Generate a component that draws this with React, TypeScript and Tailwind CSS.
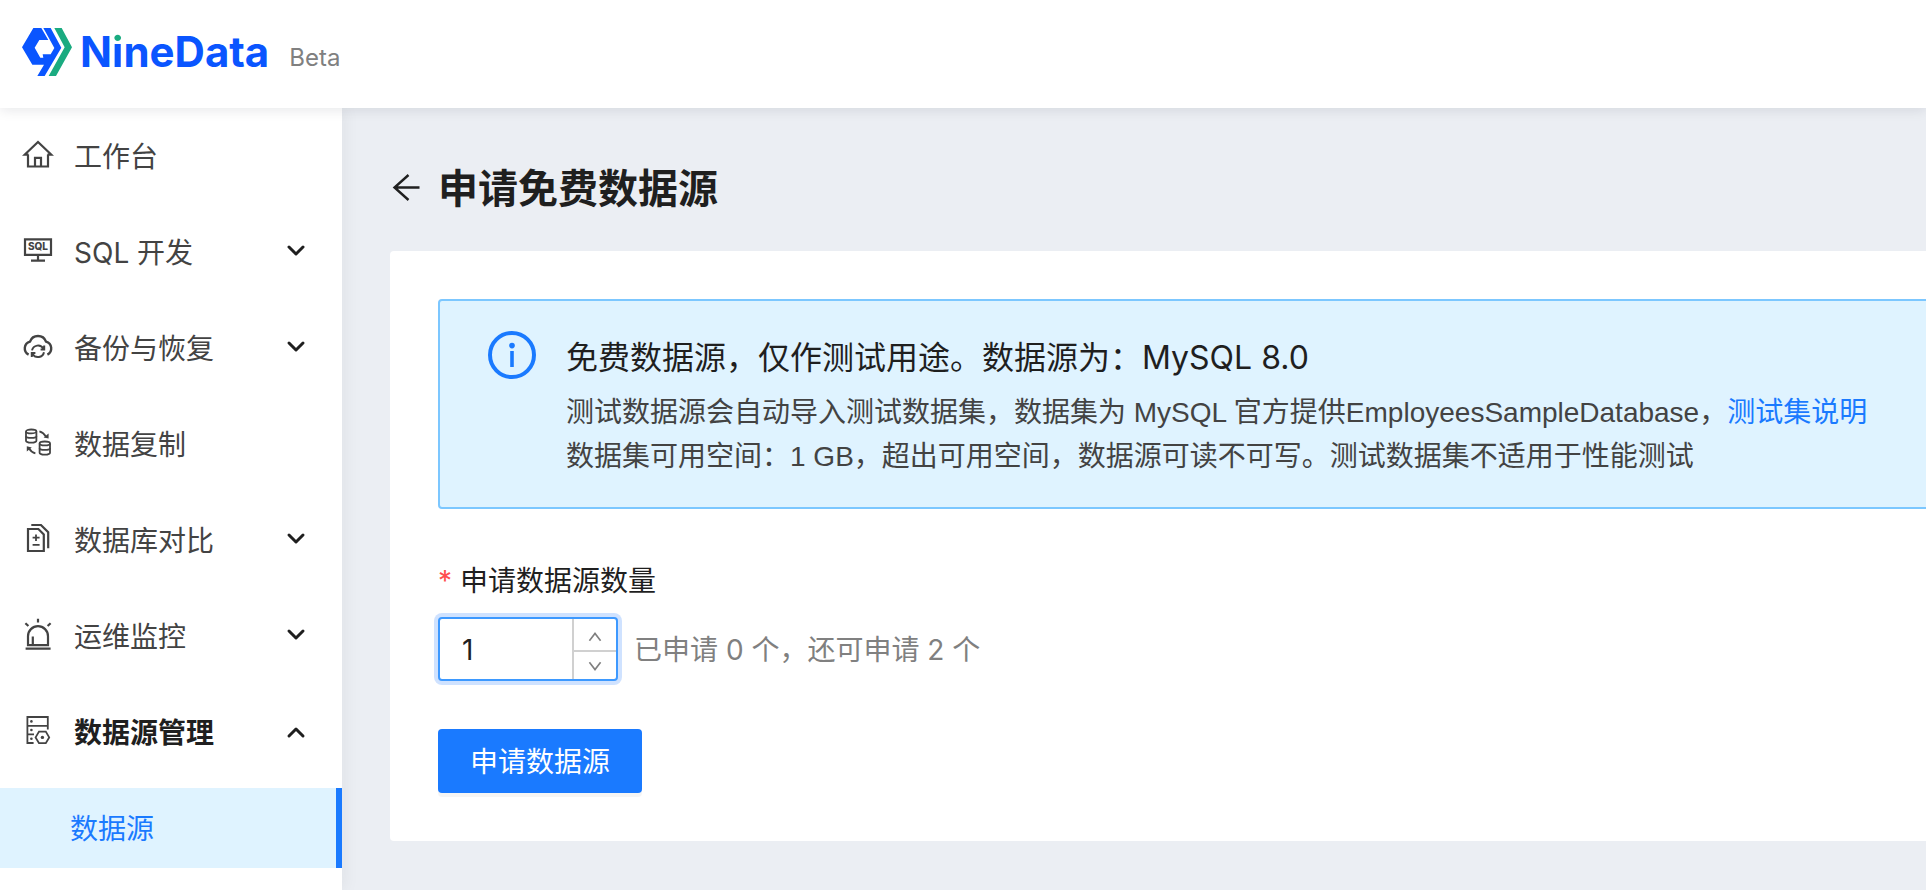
import React, { useState } from 'react';

type IconProps = { className?: string };

const iconBase = {
  width: 32,
  height: 32,
  viewBox: '0 0 32 32',
  fill: 'none',
  stroke: 'currentColor',
  strokeWidth: 2.2,
  'aria-hidden': true,
} as const;

const HomeIcon = () => (
  <svg {...iconBase}>
    <path d="M6 14.5v12h20v-12M6.5 14.7H2.6L16 2l13.4 12.7h-3.9M13 26.5v-8.7h6v8.7" />
  </svg>
);

const SqlIcon = () => (
  <svg {...iconBase}>
    <path d="M3 3.3h26v15.5H3zM16 19v5.5M9 24.6h14" />
    <text x="16" y="14.4" textAnchor="middle" fontSize="10" fontWeight="800" fill="currentColor" stroke="none">
      SQL
    </text>
  </svg>
);

const BackupIcon = () => (
  <svg {...iconBase}>
    <path d="M6.6 22.6A7 7 0 0 1 8 9.6a8.5 8.5 0 0 1 16 0 7 7 0 0 1 1.4 13" strokeWidth="2.4" />
    <path d="M10 18.4A6.2 6.2 0 0 1 21.4 16.6M22.2 13.6v4h-3.6M22 20.2a6.2 6.2 0 0 1-11.4 1.8M9.8 25v-4h3.6" strokeWidth="2" />
  </svg>
);

const ReplicationIcon = () => (
  <svg {...iconBase} strokeWidth={1.8}>
    <path d="M4 3.6v9.2c0 1 2.3 1.9 5.2 1.9s5.2-.9 5.2-1.9V3.6" />
    <ellipse cx="9.2" cy="3.4" rx="5.2" ry="1.9" />
    <path d="M4 8.2c0 1 2.3 1.7 5.2 1.7s5.2-.7 5.2-1.7" />
    <path d="M17.6 15.6v9.2c0 1 2.3 1.9 5.2 1.9s5.2-.9 5.2-1.9v-9.2" />
    <ellipse cx="22.8" cy="15.4" rx="5.2" ry="1.9" />
    <path d="M17.6 20.2c0 1 2.3 1.7 5.2 1.7s5.2-.7 5.2-1.7" />
    <path d="M17.4 3.3c3 .8 5 2.6 6.6 5.4M13.4 25.4c-3-.8-5-2.6-6.6-5.4" />
    <path d="M26.6 5.4v5.2l-5-1.2zM4.8 23.4v-5.2l5 1.2z" fill="currentColor" stroke="none" />
  </svg>
);

const CompareIcon = () => (
  <svg {...iconBase}>
    <path d="M6 5h10.4l5.4 5.4V27H6zM9.3 1h9.6l7.3 7.3v15.9" />
    <path d="M14 10.4V17M10.6 13.7h7M10.6 20.8h7" strokeWidth="1.8" />
  </svg>
);

const AlarmIcon = () => (
  <svg {...iconBase} className="overflow-visible">
    <path d="M6 25.2v-9a10 10 0 0 1 20 0v9zM3.6 28.7h25M10.8 25v-8.4M16-1.2v3.6M3.4 3.2l3 2.8M28.6 3.2l-3 2.8" />
  </svg>
);

const SourceIcon = () => (
  <svg {...iconBase} strokeWidth={1.8}>
    <path d="M11.6 27H5.4V1h20.4v12.6M5.4 9.8h20.4M5.4 18.4H12M17 15.6h6.8l3.4 5.8-3.4 5.8H17l-3.4-5.8z" />
    <g fill="currentColor" stroke="none">
      <circle cx="9.4" cy="5.4" r="1.3" />
      <circle cx="9.4" cy="14" r="1.3" />
      <circle cx="9.4" cy="22.7" r="1.3" />
      <circle cx="20.4" cy="21.4" r="1.7" />
    </g>
  </svg>
);

const Chevron = ({ open }: { open?: boolean }) => (
  <svg width="24" height="24" viewBox="0 0 24 24" fill="none" stroke="#1f1f1f" strokeWidth="3" strokeLinecap="round" strokeLinejoin="round" aria-hidden="true">
    <path d={open ? 'M5 16l7-7 7 7' : 'M5 7l7 7 7-7'} />
  </svg>
);

const Logo = () => (
  <svg width="50" height="48" viewBox="0 0 150 144" aria-hidden="true">
    <path fill="#0a55ff" d="M34 0H58L79 36H52L38 59L55 89H64L62 79H86L97 60L64 0H86L118 59L68 144H46L66 110H31L0 58Z" />
    <path fill="#1aab80" d="M97 0H119L150 58L102 144H80L128 58Z" />
  </svg>
);

const BackArrow = () => (
  <svg width="32" height="32" viewBox="0 0 32 32" fill="none" stroke="#1f1f1f" strokeWidth="2.4" aria-hidden="true">
    <path d="M29.5 15.5H4.5M18.5 3L4.5 15.5L18.5 28" />
  </svg>
);

const InfoIcon = ({ className }: IconProps) => (
  <svg className={className} width="48" height="48" viewBox="0 0 48 48" fill="none" aria-hidden="true">
    <circle cx="24" cy="24" r="22" stroke="#1a7aff" strokeWidth="4" />
    <circle cx="24" cy="14.6" r="2.8" fill="#1a7aff" />
    <path d="M24 20v16" stroke="#1a7aff" strokeWidth="3.6" />
  </svg>
);

const menuItems = [
  { label: '工作台', icon: HomeIcon },
  { label: 'SQL 开发', icon: SqlIcon, expandable: true },
  { label: '备份与恢复', icon: BackupIcon, expandable: true },
  { label: '数据复制', icon: ReplicationIcon },
  { label: '数据库对比', icon: CompareIcon, expandable: true },
  { label: '运维监控', icon: AlarmIcon, expandable: true },
  { label: '数据源管理', icon: SourceIcon, expandable: true, open: true },
];

const Header = () => (
  <header className="relative z-20 flex h-[108px] items-center bg-white px-[22px] pb-1 shadow-[0_2px_12px_rgba(0,21,41,0.1)]">
    <a href="#" className="flex items-center gap-2">
      <Logo />
      <span className="text-[42px] leading-12 font-bold text-[#0a55ff]">
        N
        <span className="bg-linear-to-b from-[#1aab80] from-35% to-[#0a55ff] to-35% bg-clip-text text-transparent">i</span>
        neData
      </span>
    </a>
    <span className="mt-3 ml-5 text-2xl text-[#808080]">Beta</span>
  </header>
);

const Sidebar = () => (
  <nav className="relative z-10 w-[342px] shrink-0 bg-white pt-2 shadow-[2px_0_16px_rgba(29,35,41,0.06)]">
    <ul className="flex flex-col gap-4">
      {menuItems.map(({ label, icon: Icon, expandable, open }) => (
        <li key={label}>
          <button
            type="button"
            aria-expanded={expandable ? !!open : undefined}
            className="flex h-20 w-full items-center pr-[34px] pl-[22px] text-left text-[#434343]"
          >
            <Icon />
            <span className={`ml-5 flex-1 pt-0.5 ${open ? 'font-bold text-[#1f1f1f]' : ''}`}>{label}</span>
            {expandable && <Chevron open={open} />}
          </button>
          {open && (
            <a
              href="#"
              aria-current="page"
              className="mt-4 flex h-20 items-center border-r-6 border-[#1a7aff] bg-[#dff3ff] pt-0.5 pl-[70px] text-[#1a7aff]"
            >
              数据源
            </a>
          )}
        </li>
      ))}
    </ul>
  </nav>
);

const Notice = () => (
  <section className="-mr-1 flex h-[210px] rounded-sm border-2 border-[#7cc7ff] bg-[#dff3ff] pt-[30px] pl-12">
    <InfoIcon className="shrink-0" />
    <div className="ml-[30px]">
      <h2 className="text-[32px] leading-[54px] text-[#1f1f1f]">免费数据源，仅作测试用途。数据源为：MySQL 8.0</h2>
      <p className="mt-1.5 font-['Liberation_Sans','Noto_Sans_CJK_SC',sans-serif] leading-11 text-[#434343]">
        测试数据源会自动导入测试数据集，数据集为 MySQL 官方提供EmployeesSampleDatabase，
        <a href="#" className="text-[#1a7aff]">测试集说明</a>
        <br />
        数据集可用空间：1 GB，超出可用空间，数据源可读不可写。测试数据集不适用于性能测试
      </p>
    </div>
  </section>
);

const App: React.FC = () => {
  const [count, setCount] = useState(1);

  const changeCount = (value: number) => setCount(Math.min(2, Math.max(1, value || 1)));

  return (
    <div
      lang="zh-CN"
      className="flex h-screen flex-col overflow-hidden bg-[#ebeef3] font-[Inter,'Noto_Sans_CJK_SC',sans-serif] text-[28px] leading-10"
    >
      <Header />
      <div className="flex min-h-0 flex-1">
        <Sidebar />
        <main className="min-w-0 flex-1 pt-12 pl-12">
          <div className="flex h-16 items-center gap-4">
            <button type="button" aria-label="返回">
              <BackArrow />
            </button>
            <h1 className="pt-0.5 text-[40px] leading-[60px] font-bold text-[#1f1f1f]">申请免费数据源</h1>
          </div>

          {/* Form card */}
          <div className="mt-[31px] rounded-l-sm bg-white py-12 pl-12">
            <Notice />

            <form className="mt-[52px]" onSubmit={(e) => e.preventDefault()}>
              <label htmlFor="count" className="flex gap-2 text-[#1f1f1f]">
                <span className="text-[#ff4d4f]">*</span>
                申请数据源数量
              </label>

              <div className="mt-4 flex items-center gap-4">
                <div className="flex h-16 w-[180px] overflow-hidden rounded-sm border-2 border-[#3d99ff] bg-white shadow-[0_0_0_4px_#cfe2ff]">
                  <input
                    id="count"
                    inputMode="numeric"
                    value={count}
                    onChange={(e) => changeCount(Number(e.target.value))}
                    className="min-w-0 flex-1 pt-0.5 pl-[22px] text-[#1f1f1f] outline-none"
                  />
                  <div className="flex w-11 flex-col border-l-2 border-[#d0d0d0]">
                    <button type="button" aria-label="增加" onClick={() => changeCount(count + 1)} className="flex flex-1 items-center justify-center border-b-2 border-[#d0d0d0] pt-1">
                      <svg width="14" height="10" viewBox="0 0 14 10" fill="none" stroke="#808080" strokeWidth="1.6" aria-hidden="true">
                        <path d="M1.4 8.8L7 1.4l5.6 7.4" />
                      </svg>
                    </button>
                    <button type="button" aria-label="减少" onClick={() => changeCount(count - 1)} className="flex flex-1 items-center justify-center">
                      <svg width="14" height="10" viewBox="0 0 14 10" fill="none" stroke="#808080" strokeWidth="1.6" aria-hidden="true">
                        <path d="M1.4 1.2L7 8.6l5.6-7.4" />
                      </svg>
                    </button>
                  </div>
                </div>
                <span className="pt-0.5 text-[#808080]">已申请 0 个，还可申请 2 个</span>
              </div>

              <button
                type="submit"
                className="mt-12 h-16 rounded-sm bg-[#1a7aff] px-8 pt-0.5 text-white shadow-[0_4px_0_rgba(0,0,0,0.04)]"
              >
                申请数据源
              </button>
            </form>
          </div>
        </main>
      </div>
    </div>
  );
};

export default App;
